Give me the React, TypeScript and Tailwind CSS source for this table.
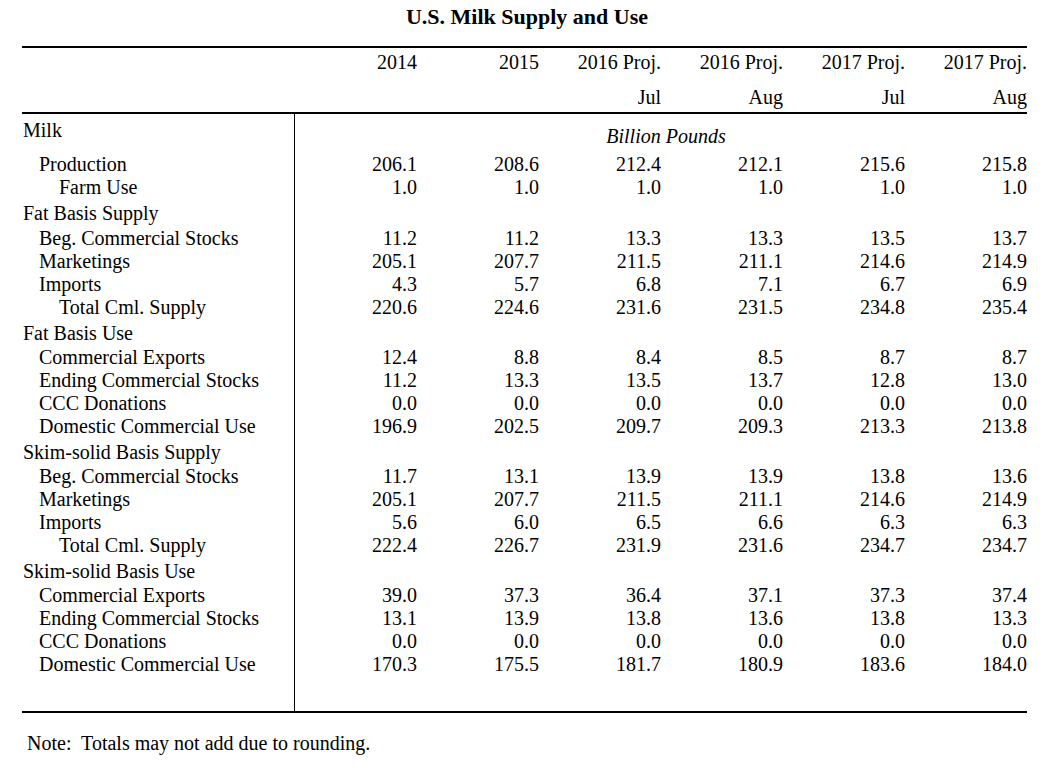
import React from "react";

type Row = {
  label: string;
  level: 0 | 1 | 2;
  values?: string[];
};

const headers: { top: string; bottom?: string }[] = [
  { top: "2014" },
  { top: "2015" },
  { top: "2016 Proj.", bottom: "Jul" },
  { top: "2016 Proj.", bottom: "Aug" },
  { top: "2017 Proj.", bottom: "Jul" },
  { top: "2017 Proj.", bottom: "Aug" },
];

const rows: Row[] = [
  { label: "Production", level: 1, values: ["206.1", "208.6", "212.4", "212.1", "215.6", "215.8"] },
  { label: "Farm Use", level: 2, values: ["1.0", "1.0", "1.0", "1.0", "1.0", "1.0"] },
  { label: "Fat Basis Supply", level: 0 },
  { label: "Beg. Commercial Stocks", level: 1, values: ["11.2", "11.2", "13.3", "13.3", "13.5", "13.7"] },
  { label: "Marketings", level: 1, values: ["205.1", "207.7", "211.5", "211.1", "214.6", "214.9"] },
  { label: "Imports", level: 1, values: ["4.3", "5.7", "6.8", "7.1", "6.7", "6.9"] },
  { label: "Total Cml. Supply", level: 2, values: ["220.6", "224.6", "231.6", "231.5", "234.8", "235.4"] },
  { label: "Fat Basis Use", level: 0 },
  { label: "Commercial Exports", level: 1, values: ["12.4", "8.8", "8.4", "8.5", "8.7", "8.7"] },
  { label: "Ending Commercial Stocks", level: 1, values: ["11.2", "13.3", "13.5", "13.7", "12.8", "13.0"] },
  { label: "CCC Donations", level: 1, values: ["0.0", "0.0", "0.0", "0.0", "0.0", "0.0"] },
  { label: "Domestic Commercial Use", level: 1, values: ["196.9", "202.5", "209.7", "209.3", "213.3", "213.8"] },
  { label: "Skim-solid Basis Supply", level: 0 },
  { label: "Beg. Commercial Stocks", level: 1, values: ["11.7", "13.1", "13.9", "13.9", "13.8", "13.6"] },
  { label: "Marketings", level: 1, values: ["205.1", "207.7", "211.5", "211.1", "214.6", "214.9"] },
  { label: "Imports", level: 1, values: ["5.6", "6.0", "6.5", "6.6", "6.3", "6.3"] },
  { label: "Total Cml. Supply", level: 2, values: ["222.4", "226.7", "231.9", "231.6", "234.7", "234.7"] },
  { label: "Skim-solid Basis Use", level: 0 },
  { label: "Commercial Exports", level: 1, values: ["39.0", "37.3", "36.4", "37.1", "37.3", "37.4"] },
  { label: "Ending Commercial Stocks", level: 1, values: ["13.1", "13.9", "13.8", "13.6", "13.8", "13.3"] },
  { label: "CCC Donations", level: 1, values: ["0.0", "0.0", "0.0", "0.0", "0.0", "0.0"] },
  { label: "Domestic Commercial Use", level: 1, values: ["170.3", "175.5", "181.7", "180.9", "183.6", "184.0"] },
];

const indent = ["pl-[1px]", "pl-[17px]", "pl-[37px]"];

export default function App() {
  return (
    <div className="w-[1046px] h-[774px] bg-white text-black font-['Liberation_Serif','Times_New_Roman',serif] overflow-hidden">
      <h1 className="pt-[3px] pl-[8px] text-center text-[22px] leading-[28px] font-bold">
        U.S. Milk Supply and Use
      </h1>

      <div className="ml-[22px] w-[1005px] mt-[15px]">
        {/* column headers */}
        <div className="border-t-2 border-b-2 border-black pt-[3px] pb-[3px] text-[20px] leading-[23px]">
          <div className="flex">
            <div className="w-[273px]" />
            {headers.map((h, i) => (
              <div key={i} className="w-[122px] text-right">
                {h.top}
              </div>
            ))}
          </div>
          <div className="flex mt-[12px]">
            <div className="w-[273px]" />
            {headers.map((h, i) => (
              <div key={i} className="w-[122px] text-right">
                {h.bottom ?? ""}
              </div>
            ))}
          </div>
        </div>

        {/* body */}
        <div className="text-[20px] leading-[23px]">
          <div className="flex h-[39.25px]">
            <div className="w-[273px] border-r border-black pt-[5px] pl-[1px]">Milk</div>
            <div className="flex-1 pt-[11px] pl-[10px] text-center italic">Billion Pounds</div>
          </div>

          {rows.map((r, i) => {
            const pad = r.level === 0 ? "pt-[3px] pb-[1.25px]" : "";
            return (
              <div key={i} className="flex">
                <div className={`w-[273px] border-r border-black whitespace-nowrap ${pad} ${indent[r.level]}`}>
                  {r.label}
                </div>
                {(r.values ?? ["", "", "", "", "", ""]).map((v, j) => (
                  <div key={j} className="w-[122px] text-right">
                    {v}
                  </div>
                ))}
              </div>
            );
          })}

          <div className="flex h-[34.75px]">
            <div className="w-[273px] border-r border-black" />
          </div>
        </div>

        <div className="border-t-2 border-black" />

        <p className="mt-[18.75px] pl-[5px] text-[20px] leading-[23px] whitespace-pre">
          {"Note:  Totals may not add due to rounding."}
        </p>
      </div>
    </div>
  );
}
